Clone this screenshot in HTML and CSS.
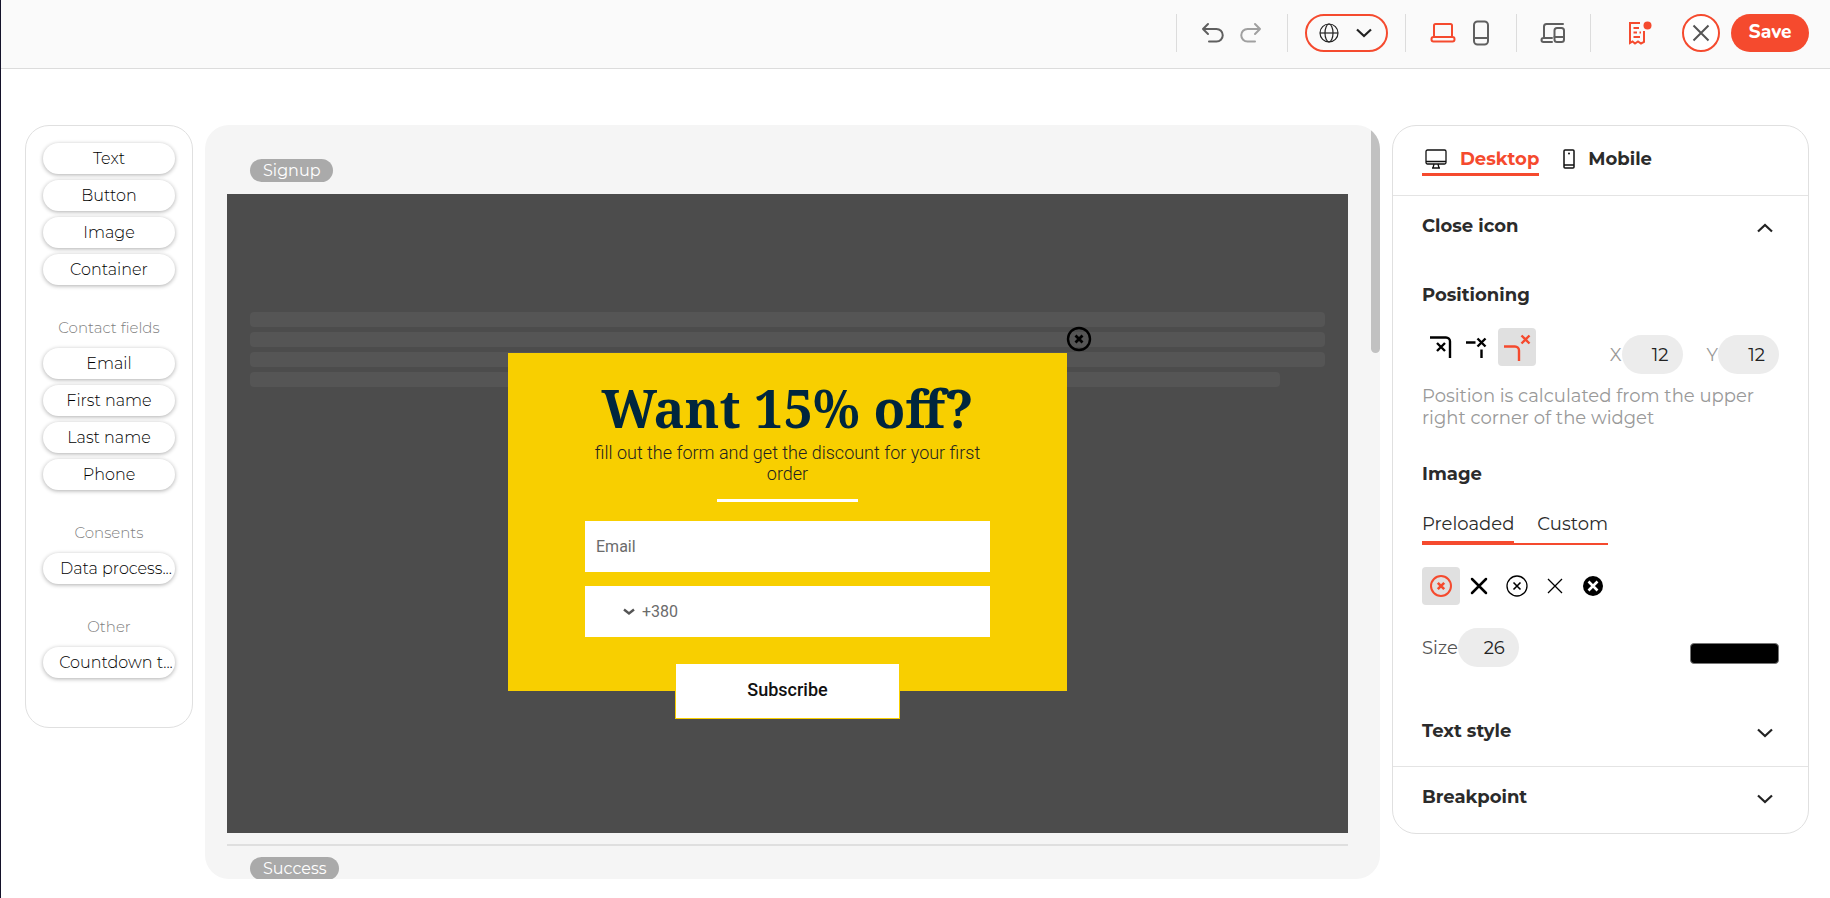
FILE: index.html
```html
<!DOCTYPE html>
<html lang="en">
<head>
    <meta charset="UTF-8">
    <meta name="viewport" content="width=device-width, initial-scale=1.0">
    <title>Widget editor</title>
    <link rel="stylesheet" href="styles.css">
</head>
<body>

<header class="topbar">
    <div class="tools tools-history">
        <button class="icon-btn" aria-label="Undo">
            <svg width="22" height="22" viewBox="0 0 22 22" fill="none" stroke="#5f5f5f" stroke-width="2" stroke-linecap="round" stroke-linejoin="round"><path d="M6 2L1 7l5 5M1 7h13.500a5.800 5.800 0 0 1 0 12.500H7"/></svg>
        </button>
        <button class="icon-btn" aria-label="Redo">
            <svg width="22" height="22" viewBox="0 0 22 22" fill="none" stroke="#a0a0a0" stroke-width="2" stroke-linecap="round" stroke-linejoin="round"><path d="M15 2l5 5-5 5M20 7H7.500a5.800 5.800 0 0 0 0 12.500H15"/></svg>
        </button>
    </div>
    <div class="tools tools-lang">
        <button class="lang-btn" aria-label="Language">
            <svg width="20" height="20" viewBox="0 0 20 20" fill="none" stroke="#222" stroke-width="1.200"><circle cx="10" cy="10" r="9"/><ellipse cx="10" cy="10" rx="4" ry="9"/><path d="M1 10h18"/></svg>
            <svg width="16" height="10" viewBox="0 0 16 10" fill="none" stroke="#222" stroke-width="2.200"><path d="M1 1.500l7 6.500 7-6.500"/></svg>
        </button>
    </div>
    <div class="tools tools-device">
        <button class="icon-btn" aria-label="Desktop view">
            <svg width="26" height="22" viewBox="0 0 26 22" fill="none" stroke="#f54a2e" stroke-width="2" stroke-linejoin="round"><rect x="4" y="2" width="18" height="13" rx="1.500"/><rect x="1.500" y="15" width="23" height="4.500" rx="2"/></svg>
        </button>
        <button class="icon-btn" aria-label="Mobile view">
            <svg width="18" height="26" viewBox="0 0 18 26" fill="none" stroke="#606060" stroke-width="2"><rect x="2" y="1.500" width="14" height="23" rx="3.500"/><path d="M2 18h14"/></svg>
        </button>
    </div>
    <div class="tools tools-both">
        <button class="icon-btn" aria-label="All devices">
            <svg width="26" height="22" viewBox="0 0 26 22" fill="none" stroke="#5f5f5f" stroke-width="2" stroke-linecap="round" stroke-linejoin="round"><path d="M4 16V4.500A2.500 2.500 0 0 1 6.500 2H23M12 16H3.500a1.700 1.700 0 0 0 0 4H12"/><rect x="14.500" y="6" width="9.500" height="14" rx="2.500"/><path d="M14.500 15H24"/></svg>
        </button>
    </div>
    <div class="tools tools-save">
        <button class="icon-btn" aria-label="Changelog">
            <svg width="26" height="26" viewBox="0 0 26 26" fill="none" stroke="#f54a2e" stroke-width="2"><path d="M13 3H3v20l2.500-1.500L8 23.500l3-2 3 2 3-1.500V11" /><path d="M6.500 8H12M6.500 12.500H10M6.500 17H13M12.500 12.500H14"/><circle cx="20.500" cy="5.500" r="4" fill="#f54a2e" stroke="none"/></svg>
        </button>
        <button class="close-btn" aria-label="Close">
            <svg width="18" height="18" viewBox="0 0 18 18" stroke="#555" stroke-width="2"><path d="M1.500 1.500l15 15M16.500 1.500l-15 15"/></svg>
        </button>
        <button class="save-btn">Save</button>
    </div>
</header>

<main class="workspace">

    <aside class="elements">
        <div class="group">
            <button class="chip">Text</button>
            <button class="chip">Button</button>
            <button class="chip">Image</button>
            <button class="chip">Container</button>
        </div>
        <div class="group">
            <h2 class="group-title">Contact fields</h2>
            <button class="chip">Email</button>
            <button class="chip">First name</button>
            <button class="chip">Last name</button>
            <button class="chip">Phone</button>
        </div>
        <div class="group">
            <h2 class="group-title">Consents</h2>
            <button class="chip chip-long">Data process...</button>
        </div>
        <div class="group">
            <h2 class="group-title">Other</h2>
            <button class="chip chip-long">Countdown t...</button>
        </div>
    </aside>

    <section class="canvas">
        <span class="tag">Signup</span>
        <div class="preview">
            <div class="bars">
                <div class="bar"></div>
                <div class="bar"></div>
                <div class="bar"></div>
                <div class="bar bar-short"></div>
            </div>
            <form class="popup">
                <button class="popup-close" type="button" aria-label="Close popup">
                    <svg width="26" height="26" viewBox="0 0 26 26" fill="none" stroke="#000" stroke-width="2.400"><circle cx="13" cy="13" r="11"/><path d="M9.500 9.500l7 7M16.500 9.500l-7 7" stroke-width="2.800"/></svg>
                </button>
                <h1 class="popup-title">Want 15% off?</h1>
                <p class="popup-text">fill out the form and get the discount for your first order</p>
                <div class="popup-line"></div>
                <input class="field" type="email" placeholder="Email" aria-label="Email">
                <div class="field field-phone">
                    <button class="code-btn" type="button" aria-label="Country code">
                        <svg width="12" height="8" viewBox="0 0 12 8" fill="none" stroke="#555" stroke-width="2.400"><path d="M1 1.500l5 4 5-4"/></svg>
                    </button>
                    <input class="phone" type="tel" placeholder="+380" aria-label="Phone">
                </div>
                <button class="subscribe" type="button">Subscribe</button>
            </form>
        </div>
        <hr class="separator">
        <span class="tag">Success</span>
        <div class="scroll-thumb"></div>
    </section>

    <aside class="settings">
        <nav class="device-tabs">
            <button class="device-tab active">
                <svg width="22" height="20" viewBox="0 0 22 20" fill="none" stroke="#111" stroke-width="1.300"><rect x="1" y="1" width="20" height="14" rx="1.500"/><path d="M1 12.500h20M9 15l-1 4M13 15l1 4M7 19h8"/></svg>
                Desktop
            </button>
            <button class="device-tab">
                <svg width="12" height="20" viewBox="0 0 12 20" fill="none" stroke="#111" stroke-width="1.500"><rect x="1" y="1" width="10" height="18" rx="1"/><path d="M1 16h10"/><circle cx="6" cy="4.500" r="1" fill="#111" stroke="none"/></svg>
                Mobile
            </button>
        </nav>

        <div class="section section-first">
            <button class="section-head">
                Close icon
                <svg class="chevron" width="16" height="10" viewBox="0 0 16 10" fill="none" stroke="#222" stroke-width="2.200"><path d="M1 8.500L8 2l7 6.500"/></svg>
            </button>
            <div class="section-body">
                <h3 class="subhead">Positioning</h3>
                <div class="position-row">
                    <div class="options">
                        <button class="option" aria-label="Inside">
                            <svg width="24" height="24" viewBox="0 0 24 24" fill="none" stroke="#000" stroke-width="2.400"><path d="M1 2.500h16a4 4 0 0 1 4 4V23M8 8l8 8M16 8l-8 8"/></svg>
                        </button>
                        <button class="option" aria-label="On the corner">
                            <svg width="24" height="24" viewBox="0 0 24 24" fill="none" stroke="#000" stroke-width="2.400"><path d="M-1 7.500h9.500M14.500 14.500v8.500M10.500 3.500l8 8M18.500 3.500l-8 8"/></svg>
                        </button>
                        <button class="option selected" aria-label="Outside">
                            <svg width="28" height="28" viewBox="0 0 28 28" fill="none" stroke="#f54a2e" stroke-width="2.400"><path d="M1 13.500h11a4 4 0 0 1 4 4V28M18.500 2.500l8 8M26.500 2.500l-8 8"/></svg>
                        </button>
                    </div>
                    <div class="coords">
                        <label class="coord">X<input class="number" type="text" value="12"></label>
                        <label class="coord">Y<input class="number" type="text" value="12"></label>
                    </div>
                </div>
                <p class="hint">Position is calculated from the upper right corner of the widget</p>

                <h3 class="subhead subhead-image">Image</h3>
                <div class="image-tabs">
                    <button class="image-tab active">Preloaded</button>
                    <button class="image-tab">Custom</button>
                </div>
                <div class="options">
                    <button class="option selected" aria-label="Circle bold">
                        <svg width="24" height="24" viewBox="0 0 24 24" fill="none" stroke="#f54a2e" stroke-width="2"><circle cx="12" cy="12" r="10"/><path d="M8.800 8.800l6.400 6.400M15.200 8.800l-6.400 6.400" stroke-width="2.600"/></svg>
                    </button>
                    <button class="option" aria-label="Cross bold">
                        <svg width="24" height="24" viewBox="0 0 24 24" stroke="#000" stroke-width="2.500" stroke-linecap="round"><path d="M5 5l14 14M19 5L5 19"/></svg>
                    </button>
                    <button class="option" aria-label="Circle thin">
                        <svg width="24" height="24" viewBox="0 0 24 24" fill="none" stroke="#000" stroke-width="1.300"><circle cx="12" cy="12" r="10"/><path d="M8.500 8.500l7 7M15.500 8.500l-7 7" stroke-width="1.600"/></svg>
                    </button>
                    <button class="option" aria-label="Cross thin">
                        <svg width="24" height="24" viewBox="0 0 24 24" stroke="#000" stroke-width="1.300"><path d="M5 5l14 14M19 5L5 19"/></svg>
                    </button>
                    <button class="option" aria-label="Circle filled">
                        <svg width="24" height="24" viewBox="0 0 24 24" fill="#000"><circle cx="12" cy="12" r="10"/><path d="M7.500 7.500l9 9M16.500 7.500l-9 9" stroke="#fff" stroke-width="2.600"/></svg>
                    </button>
                </div>
                <div class="size-row">
                    <label class="size">Size<input class="number" type="text" value="26"></label>
                    <button class="color" aria-label="Icon color"></button>
                </div>
            </div>
        </div>

        <div class="section">
            <button class="section-head">
                Text style
                <svg class="chevron" width="16" height="10" viewBox="0 0 16 10" fill="none" stroke="#222" stroke-width="2.200"><path d="M1 1.500L8 8l7-6.500"/></svg>
            </button>
        </div>
        <div class="section section-line">
            <button class="section-head">
                Breakpoint
                <svg class="chevron" width="16" height="10" viewBox="0 0 16 10" fill="none" stroke="#222" stroke-width="2.200"><path d="M1 1.500L8 8l7-6.500"/></svg>
            </button>
        </div>
    </aside>

</main>

</body>
</html>
```
FILE: styles.css
```css
* {
    box-sizing: border-box;
}

body {
    margin: 0;
    height: 100vh;
    display: flex;
    flex-direction: column;
    border-left: 1px solid #14122a;
    background: #fff;
    color: #2b2b2b;
    font-family: Montserrat, Inter, "Noto Sans", sans-serif;
    font-size: 18px;
}

button, input {
    margin: 0;
    padding: 0;
    border: 0;
    background: none;
    color: inherit;
    font: inherit;
}

svg {
    display: block;
    flex-shrink: 0;
    overflow: visible;
}

h1, h2, h3, p {
    margin: 0;
}

/* top bar */
.topbar {
    display: flex;
    justify-content: flex-end;
    align-items: center;
    height: 69px;
    padding: 0 21px 2px 0;
    background: #fafafa;
    border-bottom: 1px solid #dcdcdc;
}

.tools {
    display: flex;
    align-items: center;
    height: 38px;
    border-left: 1px solid #dcdcdc;
}

.tools-history {
    gap: 16px;
    padding: 0 25px;
}

.tools-lang {
    padding: 0 17px;
}

.tools-device {
    gap: 16px;
    padding: 0 26px 0 24px;
}

.tools-both {
    padding: 0 24px 0 23px;
}

.tools-save {
    padding-left: 36px;
}

.lang-btn {
    display: flex;
    align-items: center;
    justify-content: space-between;
    width: 83px;
    height: 38px;
    padding: 0 14px 0 12px;
    border: 2px solid #f54a2e;
    border-radius: 19px;
}

.close-btn {
    display: flex;
    align-items: center;
    justify-content: center;
    width: 38px;
    height: 38px;
    margin-left: 29px;
    border: 2px solid #f54a2e;
    border-radius: 50%;
    background: #fff;
}

.save-btn {
    width: 78px;
    height: 38px;
    padding-bottom: 2px;
    margin-left: 11px;
    border-radius: 19px;
    background: #f54a2e;
    color: #fff;
    font-family: Nunito, "Open Sans", sans-serif;
    font-size: 19px;
    font-weight: 800;
}

/* layout */
.workspace {
    flex: 1;
    min-height: 0;
    display: flex;
    align-items: flex-start;
    gap: 12px;
    padding: 56px 21px 19px 24px;
}

/* elements list */
.elements {
    display: flex;
    flex-direction: column;
    gap: 29px;
    width: 168px;
    padding: 17px 17px 49px;
    border: 1px solid #e0e0e0;
    border-radius: 24px;
}

.group {
    display: flex;
    flex-direction: column;
    gap: 6px;
}

.group-title {
    padding: 4px 0;
    color: #808080;
    font-size: 15px;
    font-weight: 300;
    line-height: 20px;
    text-align: center;
}

.chip {
    height: 31px;
    border-radius: 16px;
    background: #fff;
    box-shadow: 0 1px 4px rgba(0, 0, 0, .32);
    color: #000;
    font-size: 16px;
    font-weight: 300;
    white-space: nowrap;
}

.chip-long {
    padding-left: 14px;
}

/* canvas */
.canvas {
    position: relative;
    flex: 1;
    align-self: stretch;
    overflow: hidden;
    padding: 34px 32px 0 22px;
    border-radius: 24px;
    background: #f5f5f5;
}

.tag {
    display: block;
    width: fit-content;
    margin-left: 23px;
    padding: 0 12px 0 13px;
    border-radius: 12px;
    background: #aaa;
    color: #fff;
    font-size: 16px;
    line-height: 23px;
}

.preview {
    display: grid;
    align-items: start;
    height: 639px;
    margin-top: 12px;
    background: #4c4c4c;
}

.bars {
    grid-area: 1 / 1;
    display: flex;
    flex-direction: column;
    gap: 5px;
    padding: 118px 23px 0;
}

.bar {
    height: 15px;
    border-radius: 4px;
    background: #555;
}

.bar-short {
    margin-right: 45px;
}

.popup {
    grid-area: 1 / 1;
    position: relative;
    display: flex;
    flex-direction: column;
    align-items: center;
    justify-self: center;
    width: 559px;
    height: 338px;
    margin-top: 159px;
    padding: 24px 77px 0;
    background: #f8cf00;
    font-family: Roboto, sans-serif;
}

.popup-close {
    position: absolute;
    top: -27px;
    right: -25px;
}

.popup-title {
    padding-bottom: 4px;
    color: #00263e;
    font-family: "Noto Serif", "Liberation Serif", serif;
    font-size: 52px;
    font-weight: 700;
    line-height: 61px;
    white-space: nowrap;
}

.popup-text {
    color: #222;
    font-size: 18px;
    font-weight: 300;
    line-height: 21px;
    text-align: center;
}

.popup-line {
    flex-shrink: 0;
    width: 141px;
    height: 3px;
    margin: 15px 0 19px;
    background: #fff;
}

.field {
    flex-shrink: 0;
    width: 100%;
    height: 51px;
    margin-bottom: 14px;
    padding: 0 11px;
    background: #fff;
    font-size: 16px;
}

.field-phone {
    display: flex;
    align-items: center;
    gap: 7px;
    padding-left: 38px;
}

.phone {
    flex: 1;
}

.field::placeholder, .phone::placeholder {
    color: #6b6b6b;
}

.subscribe {
    flex-shrink: 0;
    width: 225px;
    height: 56px;
    padding-bottom: 4px;
    margin-top: 12px;
    border: 1px solid #f8cf00;
    background: #fff;
    color: #111;
    font-size: 18px;
    font-weight: 500;
}

.separator {
    height: 2px;
    margin: 11px 0;
    border: 0;
    background: #dfdfdf;
}

.scroll-thumb {
    position: absolute;
    top: 1px;
    right: 0;
    width: 9px;
    height: 227px;
    border-radius: 5px;
    background: #c1c1c1;
}

/* settings */
.settings {
    width: 417px;
    border: 1px solid #e0e0e0;
    border-radius: 24px;
}

.device-tabs {
    display: flex;
    gap: 21px;
    height: 70px;
    padding: 16px 29px 0;
    border-bottom: 1px solid #e4e4e4;
}

.device-tab {
    display: flex;
    align-items: center;
    gap: 13px;
    height: 34px;
    padding: 2px 0 0 3px;
    border-bottom: 3px solid transparent;
    font-weight: 700;
}

.device-tab.active {
    border-bottom-color: #f54a2e;
    color: #f54a2e;
}

.section {
    padding: 0 29px 5px;
}

.section-first {
    padding-bottom: 34px;
}

.section-line {
    padding-bottom: 6px;
    border-top: 1px solid #e4e4e4;
}

.section-head {
    display: flex;
    align-items: center;
    justify-content: space-between;
    width: 100%;
    height: 60px;
    padding-right: 6px;
    font-weight: 700;
}

.chevron {
    margin-top: 4px;
}

.subhead {
    margin: 27px 0 21px;
    font-size: 18px;
    font-weight: 700;
    line-height: 24px;
}

.subhead-image {
    margin: 33px 0 27px;
}

.position-row {
    display: flex;
    justify-content: space-between;
    height: 46px;
}

.options {
    display: flex;
}

.option {
    display: flex;
    align-items: center;
    justify-content: center;
    width: 38px;
    height: 38px;
    border-radius: 4px;
}

.option.selected {
    background: #e0e0e0;
}

.coords {
    display: flex;
    align-items: flex-end;
    gap: 24px;
}

.coord, .size {
    display: flex;
    align-items: center;
    color: #999;
}

.size {
    color: #555;
}

.number {
    width: 61px;
    height: 39px;
    padding-right: 14px;
    border-radius: 20px;
    background: #ececec;
    color: #222;
    text-align: right;
}

.hint {
    margin-top: 11px;
    color: #999;
    line-height: 22px;
}

.image-tabs {
    display: flex;
    width: fit-content;
    margin-bottom: 22px;
}

.image-tab {
    height: 32px;
    padding: 0 0 8px 23px;
    border-bottom: 2px solid #f54a2e;
}

.image-tab.active {
    padding-left: 0;
    border-bottom-width: 4px;
}

.size-row {
    display: flex;
    align-items: flex-end;
    justify-content: space-between;
    margin-top: 23px;
}

.color {
    width: 89px;
    height: 21px;
    margin-bottom: 3px;
    border: 1px solid #767676;
    border-radius: 4px;
    background: #000;
}
```
